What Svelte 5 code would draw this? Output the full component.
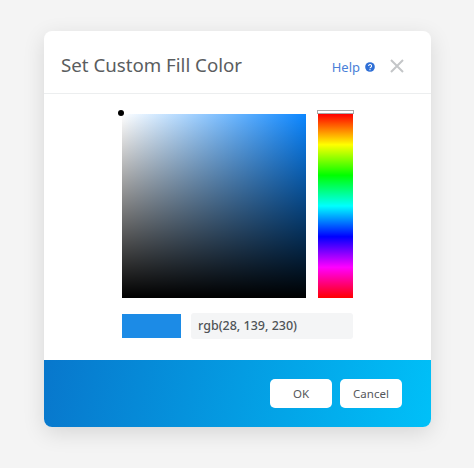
<script>
  let color = 'rgb(28, 139, 230)';
</script>

<div class="page">
  <div class="dialog">
    <header>
      <h2>Set Custom Fill Color</h2>
      <a class="help" href="#help">Help
        <svg viewBox="0 0 12 12" width="10" height="10">
          <circle cx="6" cy="6" r="5.8" fill="#2f6fd6" />
          <path d="M4.3 4.7a1.8 1.7 0 1 1 2.7 1.5c-.7.4-1 .7-1 1.3" fill="none" stroke="#fff" stroke-width="1.3" />
          <circle cx="6" cy="9.2" r=".8" fill="#fff" />
        </svg>
      </a>
      <button class="close" aria-label="Close">
        <svg viewBox="0 0 14 14" width="14" height="14">
          <path d="M1 1l12 12M13 1L1 13" stroke="#c4c6c8" stroke-width="2" fill="none" />
        </svg>
      </button>
    </header>
    <div class="body">
      <div class="pickers">
        <div class="square"><span class="dot"></span></div>
        <div class="hue"><span class="handle"></span></div>
      </div>
      <div class="values">
        <div class="swatch" style="background: {color}"></div>
        <div class="input">{color}</div>
      </div>
    </div>
    <footer>
      <button>OK</button>
      <button>Cancel</button>
    </footer>
  </div>
</div>

<style>
  :global(body) {
    background: #f4f4f4;
  }

  .page {
    height: 468px;
    padding: 31px 43px 0 44px;
    box-sizing: border-box;
    font-family: "Noto Sans", sans-serif;
  }

  .dialog {
    height: 396px;
    background: #fff;
    border-radius: 8px;
    overflow: hidden;
    display: flex;
    flex-direction: column;
    box-shadow: 0 6px 22px rgba(0, 0, 0, 0.12);
  }

  header {
    height: 58px;
    display: flex;
    align-items: center;
    padding: 4px 27px 0 17px;
    border-bottom: 1px solid #eceeef;
  }

  h2 {
    margin: 0;
    flex: 1;
    font-size: 18.7px;
    font-weight: 400;
    color: #5a5d60;
  }

  .help {
    display: flex;
    align-items: center;
    gap: 5px;
    font-size: 13px;
    color: #4a7fd8;
    text-decoration: none;
    padding-top: 6px;
  }

  .close {
    margin: 4px 0 0 15px;
    padding: 0;
    border: none;
    background: none;
    display: flex;
  }

  .body {
    flex: 1;
    padding-top: 20px;
    display: flex;
    flex-direction: column;
    align-items: center;
    gap: 15px;
  }

  .pickers {
    width: 231px;
    display: flex;
    justify-content: space-between;
  }

  .square {
    position: relative;
    width: 184px;
    height: 184px;
    background: linear-gradient(to top, #000, transparent),
      linear-gradient(to right, #fff, #0b86ff);
  }

  .dot {
    position: absolute;
    left: -4px;
    top: -4px;
    width: 6px;
    height: 6px;
    border-radius: 50%;
    background: #000;
  }

  .hue {
    position: relative;
    width: 35px;
    height: 184px;
    background: linear-gradient(to bottom, #f00, #ff0 16.7%, #0f0 33.3%, #0ff 50%, #00f 66.7%, #f0f 83.3%, #f00);
  }

  .handle {
    position: absolute;
    left: -1px;
    right: -1px;
    top: -4px;
    height: 2px;
    background: #fff;
    border: 1px solid #a8a8a8;
  }

  .values {
    width: 231px;
    display: flex;
    align-items: center;
    gap: 10px;
  }

  .swatch {
    width: 59px;
    height: 24px;
  }

  .input {
    flex: 1;
    height: 26px;
    line-height: 26px;
    padding-left: 7px;
    background: #f4f5f6;
    border-radius: 3px;
    font-size: 12.5px;
    font-weight: 500;
    color: #4f5357;
  }

  footer {
    height: 67px;
    display: flex;
    justify-content: flex-end;
    align-items: center;
    gap: 8px;
    padding-right: 29px;
    background: linear-gradient(100deg, #0877cc, #00c0f8);
  }

  footer button {
    width: 62px;
    height: 29px;
    border: none;
    border-radius: 5px;
    background: #fff;
    font-family: inherit;
    font-size: 11.5px;
    color: #55585b;
  }
</style>
